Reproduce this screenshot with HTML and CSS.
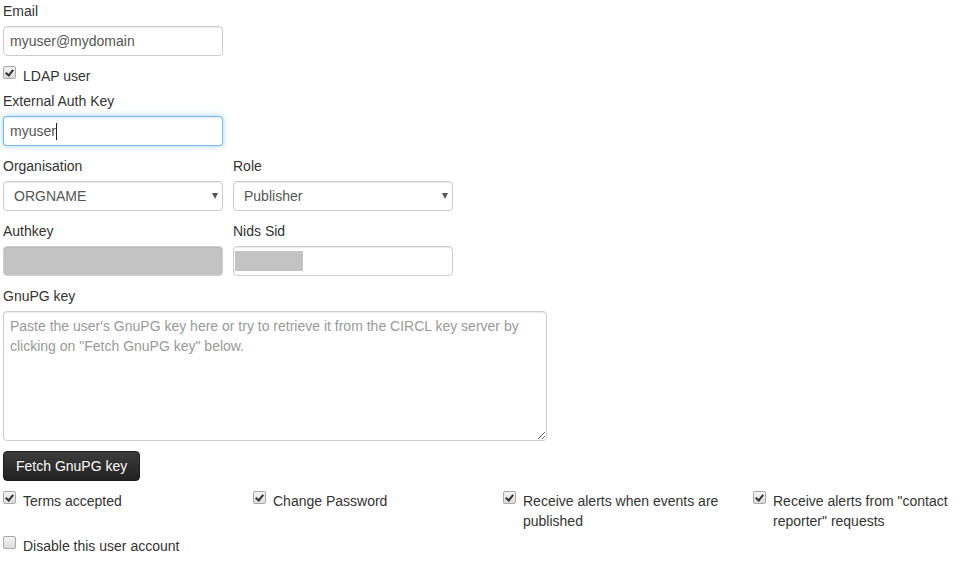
FILE: index.html
```html
<!DOCTYPE html>
<html>
<head>
<meta charset="utf-8">
<link rel="stylesheet" href="styles.css">
</head>
<body>
<form class="form">
  <label class="lbl">Email</label>
  <input class="field" type="text" value="myuser@mydomain">

  <label class="check"><span class="box checked"></span>LDAP user</label>

  <label class="lbl">External Auth Key</label>
  <div class="field focus">myuser<span class="caret"></span></div>

  <div class="row">
    <div class="col">
      <label class="lbl">Organisation</label>
      <div class="select-wrap"><select class="field select"><option>ORGNAME</option></select></div>
    </div>
    <div class="col">
      <label class="lbl">Role</label>
      <div class="select-wrap"><select class="field select"><option>Publisher</option></select></div>
    </div>
  </div>

  <div class="row">
    <div class="col">
      <label class="lbl">Authkey</label>
      <div class="field redacted"></div>
    </div>
    <div class="col">
      <label class="lbl">Nids Sid</label>
      <div class="field partial"><span class="redact"></span></div>
    </div>
  </div>

  <label class="lbl">GnuPG key</label>
  <textarea class="field area" placeholder="Paste the user's GnuPG key here or try to retrieve it from the CIRCL key server by clicking on &quot;Fetch GnuPG key&quot; below."></textarea>

  <button type="button" class="btn">Fetch GnuPG key</button>

  <div class="checks">
    <label class="check"><span class="box checked"></span>Terms accepted</label>
    <label class="check"><span class="box checked"></span>Change Password</label>
    <label class="check"><span class="box checked"></span>Receive alerts when events are published</label>
    <label class="check"><span class="box checked"></span>Receive alerts from "contact reporter" requests</label>
  </div>

  <label class="check"><span class="box"></span>Disable this user account</label>
</form>
</body>
</html>
```
FILE: styles.css
```css
html, body {
  margin: 0;
  padding: 0;
  background: #fff;
  overflow: hidden;
}
body {
  font-family: "Liberation Sans", Arial, Helvetica, sans-serif;
  font-size: 14px;
  line-height: 20px;
  color: #333;
}
.form {
  padding: 1px 0 0 3px;
}
.lbl {
  display: block;
  margin-bottom: 5px;
  line-height: 20px;
}
.field {
  display: block;
  box-sizing: border-box;
  width: 220px;
  height: 30px;
  margin: 0 0 10px 0;
  padding: 4px 6px;
  font-family: inherit;
  font-size: 14px;
  line-height: 20px;
  color: #555;
  background: #fff;
  border: 1px solid #ccc;
  border-radius: 4px;
  box-shadow: inset 0 1px 1px rgba(0,0,0,0.075);
  outline: none;
}
.focus {
  border-color: rgba(82,168,236,0.8);
  box-shadow: inset 0 1px 1px rgba(0,0,0,0.075), 0 0 6px rgba(82,168,236,0.5);
  color: #555;
}
.caret {
  display: inline-block;
  width: 1px;
  height: 17px;
  background: #222;
  vertical-align: -4px;
}
.row {
  display: flex;
  gap: 10px;
}
.col {
  width: 220px;
}
.select-wrap {
  position: relative;
  width: 220px;
}
.select {
  -webkit-appearance: none;
  appearance: none;
  padding: 4px 10px;
  color: #555;
}
.select-wrap::after {
  content: "";
  position: absolute;
  right: 5px;
  top: 12px;
  border-left: 3px solid transparent;
  border-right: 3px solid transparent;
  border-top: 6px solid #555;
}
.redacted {
  background: #c3c3c3;
  border-color: #d0d0d0;
}
.partial {
  padding: 4px 1px;
}
.redact {
  display: block;
  width: 68px;
  height: 20px;
  background: #c3c3c3;
}
.area {
  width: 544px;
  height: 130px;
  resize: both;
  color: #555;
}
.area::placeholder {
  color: #999;
}
.btn {
  display: block;
  box-sizing: border-box;
  height: 30px;
  margin: 0 0 10px 0;
  padding: 4px 12px;
  white-space: nowrap;
  font-family: inherit;
  font-size: 14px;
  line-height: 20px;
  color: #fff;
  background: linear-gradient(#3c3c3c, #222);
  border: 1px solid #1e1e1e;
  border-radius: 4px;
  text-shadow: 0 -1px 0 rgba(0,0,0,0.25);
}
.check {
  display: block;
  position: relative;
  padding-left: 20px;
  min-height: 20px;
  margin-bottom: 5px;
  line-height: 20px;
}
.box {
  position: absolute;
  left: 0;
  top: 0;
  box-sizing: border-box;
  width: 13px;
  height: 13px;
  border: 1px solid #a9a9a9;
  border-radius: 2px;
  background: linear-gradient(#f4f4f4, #dcdcdc);
}
.box.checked::after {
  content: "";
  position: absolute;
  left: 3px;
  top: 1px;
  width: 3px;
  height: 6px;
  border-right: 2px solid #333;
  border-bottom: 2px solid #333;
  transform: rotate(40deg);
}
.checks {
  display: grid;
  grid-template-columns: 250px 250px 250px 1fr;
}
.checks .check {
  padding-right: 15px;
}
```
